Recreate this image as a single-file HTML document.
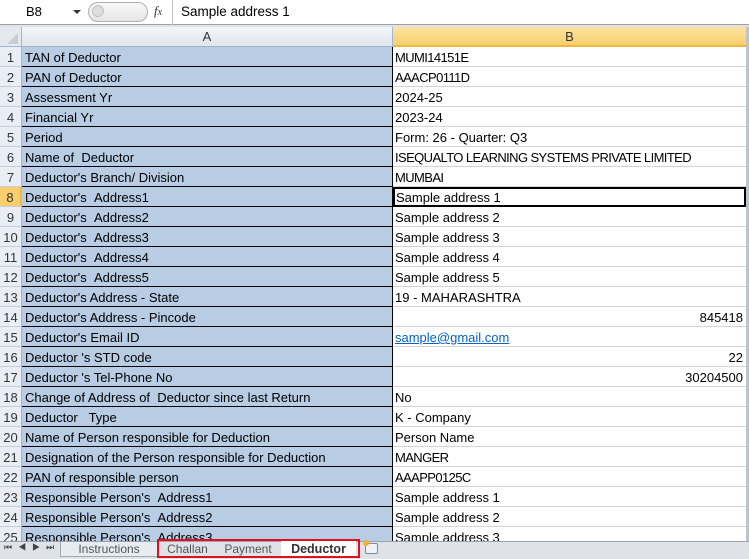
<!DOCTYPE html>
<html><head><meta charset="utf-8"><style>
*{margin:0;padding:0;box-sizing:border-box}
body{width:749px;height:559px;overflow:hidden;background:#fff;font-family:"Liberation Sans",sans-serif;font-size:13px;color:#000;position:relative}
.abs{position:absolute}
.rh{position:absolute;left:0;width:22px;height:20px;background:#e9eef6;border-bottom:1px solid #c5cdd9;border-right:1px solid #9eb6ce;color:#333;text-align:center;line-height:21px;font-size:13px}
.ca{position:absolute;left:22px;width:371px;height:20px;background:#b8cce4;border-bottom:1px solid #000;border-right:1px solid #000;padding-left:3px;line-height:21px;white-space:nowrap;overflow:hidden}
.cb{position:absolute;left:393px;width:353px;height:20px;border-bottom:1px solid #d4d4d4;padding-left:2px;padding-right:3px;line-height:21px;white-space:nowrap;overflow:hidden}
.r{text-align:right}
.caps{letter-spacing:-0.6px}
</style></head><body>
<div class="abs" style="left:0;top:0;width:749px;height:25px;background:#fff;border-bottom:1px solid #a0a0a0"></div>
<div class="abs" style="left:26px;top:4px;font-size:13px">B8</div>
<div class="abs" style="left:73px;top:10px;width:0;height:0;border-left:4px solid transparent;border-right:4px solid transparent;border-top:4px solid #333"></div>
<div class="abs" style="left:88px;top:2px;width:60px;height:20px;border:1px solid #b0b0b0;border-radius:10px;background:linear-gradient(#f8f8f8,#e6e6e6)"></div>
<div class="abs" style="left:92px;top:5px;width:12px;height:12px;border-radius:6px;background:#ddd;border:1px solid #c0c0c0"></div>
<div class="abs" style="left:154px;top:3px;font-family:'Liberation Serif',serif;font-style:italic;font-size:13px;color:#333">f<span style="font-size:10px">x</span></div>
<div class="abs" style="left:172px;top:0;width:1px;height:25px;background:#c0c0c0"></div>
<div class="abs" style="left:181px;top:4px;font-size:13.5px">Sample address 1</div>
<div class="abs" style="left:0;top:25px;width:749px;height:2px;background:#dfe3e8"></div>
<div class="abs" style="left:0;top:27px;width:22px;height:20px;background:#e4e9f0;border-right:1px solid #9eb6ce;border-bottom:1px solid #9eb6ce"></div>
<div class="abs" style="left:7px;top:33px;width:0;height:0;border-left:11px solid transparent;border-bottom:11px solid #c8ced6"></div>
<div class="abs" style="left:22px;top:27px;width:371px;height:20px;background:linear-gradient(#f2f5f9,#e1e6ec);border-right:1px solid #9eb6ce;border-bottom:1px solid #9eb6ce;text-align:center;line-height:20px;color:#333">A</div>
<div class="abs" style="left:393px;top:27px;width:353px;height:20px;background:linear-gradient(#fbe3a0,#f8cf6c);border-bottom:2px solid #f2b540;text-align:center;line-height:20px;color:#333">B</div>
<div class="abs" style="left:746px;top:27px;width:3px;height:514px;background:#bcc3cc"></div>

<div class="rh" style="top:47px">1</div><div class="ca" style="top:47px">TAN of Deductor</div><div class="cb caps" style="top:47px">MUMI14151E</div>
<div class="rh" style="top:67px">2</div><div class="ca" style="top:67px">PAN of Deductor</div><div class="cb caps" style="top:67px">AAACP0111D</div>
<div class="rh" style="top:87px">3</div><div class="ca" style="top:87px">Assessment Yr</div><div class="cb" style="top:87px">2024-25</div>
<div class="rh" style="top:107px">4</div><div class="ca" style="top:107px">Financial Yr</div><div class="cb" style="top:107px">2023-24</div>
<div class="rh" style="top:127px">5</div><div class="ca" style="top:127px">Period</div><div class="cb" style="top:127px">Form: 26 - Quarter: Q3</div>
<div class="rh" style="top:147px">6</div><div class="ca" style="top:147px">Name of &nbsp;Deductor</div><div class="cb caps" style="top:147px">ISEQUALTO LEARNING SYSTEMS PRIVATE LIMITED</div>
<div class="rh" style="top:167px">7</div><div class="ca" style="top:167px">Deductor's Branch/ Division</div><div class="cb caps" style="top:167px">MUMBAI</div>
<div class="rh" style="top:187px;background:#f8cf6c;border-right:2px solid #f2b540">8</div><div class="ca" style="top:187px">Deductor's &nbsp;Address1</div><div class="cb" style="top:187px;border:2px solid #000;line-height:17px;padding-left:1px">Sample address 1</div>
<div class="rh" style="top:207px">9</div><div class="ca" style="top:207px">Deductor's &nbsp;Address2</div><div class="cb" style="top:207px">Sample address 2</div>
<div class="rh" style="top:227px">10</div><div class="ca" style="top:227px">Deductor's &nbsp;Address3</div><div class="cb" style="top:227px">Sample address 3</div>
<div class="rh" style="top:247px">11</div><div class="ca" style="top:247px">Deductor's &nbsp;Address4</div><div class="cb" style="top:247px">Sample address 4</div>
<div class="rh" style="top:267px">12</div><div class="ca" style="top:267px">Deductor's &nbsp;Address5</div><div class="cb" style="top:267px">Sample address 5</div>
<div class="rh" style="top:287px">13</div><div class="ca" style="top:287px">Deductor's Address - State</div><div class="cb" style="top:287px">19 - MAHARASHTRA</div>
<div class="rh" style="top:307px">14</div><div class="ca" style="top:307px">Deductor's Address - Pincode</div><div class="cb r" style="top:307px">845418</div>
<div class="rh" style="top:327px">15</div><div class="ca" style="top:327px">Deductor's Email ID</div><div class="cb" style="top:327px;color:#0563c1"><span style="text-decoration:underline">sample@gmail.com</span></div>
<div class="rh" style="top:347px">16</div><div class="ca" style="top:347px">Deductor 's STD code</div><div class="cb r" style="top:347px">22</div>
<div class="rh" style="top:367px">17</div><div class="ca" style="top:367px">Deductor 's Tel-Phone No</div><div class="cb r" style="top:367px">30204500</div>
<div class="rh" style="top:387px">18</div><div class="ca" style="top:387px">Change of Address of &nbsp;Deductor since last Return</div><div class="cb" style="top:387px">No</div>
<div class="rh" style="top:407px">19</div><div class="ca" style="top:407px">Deductor &nbsp;&nbsp;Type</div><div class="cb" style="top:407px">K - Company</div>
<div class="rh" style="top:427px">20</div><div class="ca" style="top:427px">Name of Person responsible for Deduction</div><div class="cb" style="top:427px">Person Name</div>
<div class="rh" style="top:447px">21</div><div class="ca" style="top:447px">Designation of the Person responsible for Deduction</div><div class="cb caps" style="top:447px">MANGER</div>
<div class="rh" style="top:467px">22</div><div class="ca" style="top:467px">PAN of responsible person</div><div class="cb caps" style="top:467px">AAAPP0125C</div>
<div class="rh" style="top:487px">23</div><div class="ca" style="top:487px">Responsible Person's &nbsp;Address1</div><div class="cb" style="top:487px">Sample address 1</div>
<div class="rh" style="top:507px">24</div><div class="ca" style="top:507px">Responsible Person's &nbsp;Address2</div><div class="cb" style="top:507px">Sample address 2</div>
<div class="rh" style="top:527px">25</div><div class="ca" style="top:527px">Responsible Person's &nbsp;Address3</div><div class="cb" style="top:527px">Sample address 3</div>

<div class="abs" style="left:0;top:541px;width:749px;height:18px;background:#dfe3e8;border-top:1px solid #9aa4b0"></div>
<div class="abs" style="left:4px;top:542px;font-size:9px;color:#444;letter-spacing:6px">⏮◀▶⏭</div>
<div class="abs" style="left:60px;top:542px;width:98px;height:15px;background:#e8ebef;border:1px solid #a0a8b4;border-top:none;text-align:center;font-size:12px;line-height:14px;color:#555">Instructions</div>
<div class="abs" style="left:160px;top:542px;width:55px;height:15px;text-align:center;font-size:12px;line-height:14px;color:#555">Challan</div>
<div class="abs" style="left:218px;top:542px;width:60px;height:15px;text-align:center;font-size:12px;line-height:14px;color:#555">Payment</div>
<div class="abs" style="left:281px;top:541px;width:75px;height:16px;background:#fff;text-align:center;font-size:12.5px;line-height:16px;font-weight:bold;color:#333">Deductor</div>
<div class="abs" style="left:157px;top:539px;width:203px;height:19px;border:2px solid #e0101e"></div>
<div class="abs" style="left:365px;top:543px;width:13px;height:11px;border:1px solid #7a8aa0;border-radius:2px;background:#eef2f7"></div>
<div class="abs" style="left:363px;top:540px;width:6px;height:6px;border-radius:3px;background:#f0b030"></div>
</body></html>
